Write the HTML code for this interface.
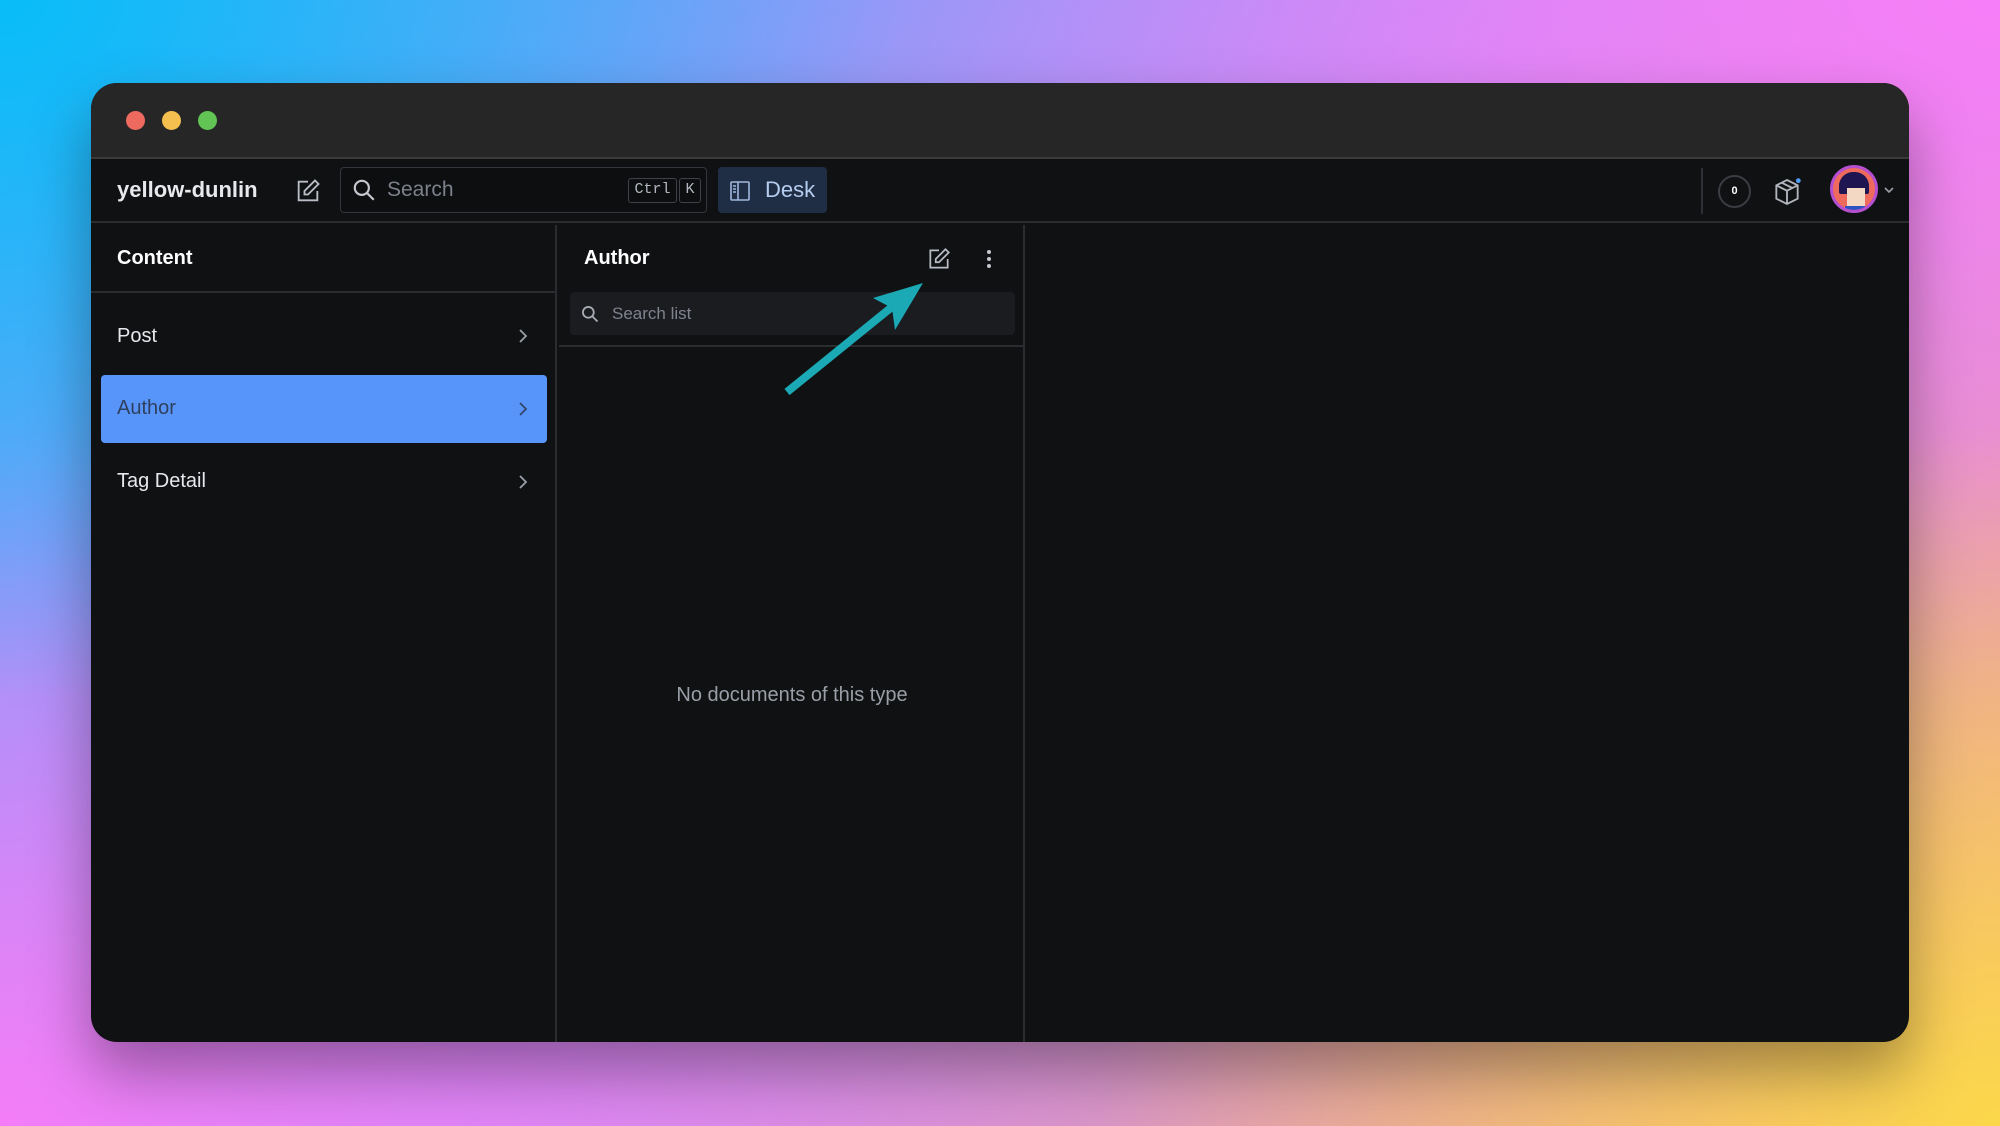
<!DOCTYPE html>
<html><head><meta charset="utf-8"><style>
*{margin:0;padding:0;box-sizing:border-box}
body{width:2000px;height:1126px;overflow:hidden;font-family:"Liberation Sans",sans-serif;position:relative;
background:
radial-gradient(ellipse 900px 700px at 0% 0%, #08bdf8 0%, rgba(8,189,248,0) 100%),
radial-gradient(ellipse 900px 700px at 100% 100%, #fbd84a 0%, rgba(251,216,74,0) 100%),
radial-gradient(ellipse 1100px 700px at 100% 0%, #f77ef9 0%, rgba(247,126,249,0) 100%),
radial-gradient(ellipse 1100px 700px at 0% 100%, #f47df7 0%, rgba(244,125,247,0) 100%),
linear-gradient(135deg,#5aa8fb,#c48cf5 50%,#f7a38a);}
.win{position:absolute;left:91px;top:83px;width:1818px;height:959px;border-radius:26px;overflow:hidden;background:#101113;box-shadow:0 30px 60px rgba(0,0,0,.35)}
.title{position:absolute;left:0;top:0;right:0;height:76px;background:#262626;border-bottom:2px solid #3a3a3a}
.dot{position:absolute;top:28px;width:19px;height:19px;border-radius:50%}
.tb{position:absolute;left:0;top:77px;right:0;height:63px;background:#101113;border-bottom:2px solid #2a2c30}
.abs{position:absolute}
</style></head><body>
<div class="win">
 <div class="title">
  <div class="dot" style="left:35px;background:#ee6a5e"></div>
  <div class="dot" style="left:71px;background:#f5bf4f"></div>
  <div class="dot" style="left:107px;background:#61c454"></div>
 </div>
 <div class="tb">
  <div class="abs" style="left:26px;top:17px;font-weight:bold;font-size:22px;color:#e6e8ec">yellow-dunlin</div>
  <svg class="abs" style="left:203px;top:17px" width="28" height="28" viewBox="0 0 24 24" fill="none" stroke="#b9bdc6" stroke-width="1.6"><path d="M12 4H4v16h16v-8"/><path d="M18 3l3 3-9 9H9v-3z"/></svg>
  <div class="abs" style="left:249px;top:7px;width:367px;height:46px;border:1.5px solid #33363c;border-radius:4px;background:#0d0e10"></div>
  <svg class="abs" style="left:260px;top:17px" width="26" height="26" viewBox="0 0 24 24" fill="none" stroke="#c4c7ce" stroke-width="2"><circle cx="10" cy="10" r="6.5"/><path d="M15 15l6 6"/></svg>
  <div class="abs" style="left:296px;top:18px;font-size:21px;color:#7b808a">Search</div>
  <div class="abs" style="left:537px;top:18px;width:49px;height:25px;border:1.5px solid #3e4148;border-radius:3px;font-family:'Liberation Mono',monospace;font-size:15px;color:#b4b8c0;text-align:center;line-height:22px">Ctrl</div>
  <div class="abs" style="left:588px;top:18px;width:22px;height:25px;border:1.5px solid #3e4148;border-radius:3px;font-family:'Liberation Mono',monospace;font-size:15px;color:#b4b8c0;text-align:center;line-height:22px">K</div>
  <div class="abs" style="left:627px;top:7px;width:109px;height:46px;background:#1f2e45;border-radius:4px"></div>
  <svg class="abs" style="left:637px;top:19px" width="24" height="24" viewBox="0 0 24 24" fill="none" stroke="#9fb8dc" stroke-width="1.6"><rect x="3" y="3" width="18" height="18" rx="1"/><path d="M10 3v18M5 7h3M5 10h3M5 13h3"/></svg>
  <div class="abs" style="left:674px;top:17px;font-size:22px;color:#b6cdef">Desk</div>
  <div class="abs" style="left:1610px;top:8px;width:2px;height:46px;background:#2e3035"></div>
  <div class="abs" style="left:1627px;top:15px;width:33px;height:33px;border:2px solid #3a3d43;border-radius:50%;color:#fff;font-size:11px;font-weight:bold;text-align:center;line-height:29px">0</div>
  <svg class="abs" style="left:1680px;top:16px" width="32" height="32" viewBox="0 0 24 24" fill="none" stroke="#b0b4bc" stroke-width="1.4"><path d="M12 3l8 4v10l-8 4-8-4V7z"/><path d="M4 7l8 4 8-4M12 11v10M8 5l8 4"/><circle cx="20.5" cy="3.5" r="1.8" fill="#4e9cf5" stroke="none"/></svg>
  <div class="abs" style="left:1739px;top:5px;width:48px;height:48px;border-radius:50%;background:#ee6a5c;border:3px solid #b44fd0;overflow:hidden">
   <div class="abs" style="left:6px;top:4px;width:30px;height:22px;background:#1f1550;border-radius:14px 14px 2px 2px"></div>
   <div class="abs" style="left:14px;top:20px;width:18px;height:18px;background:#f3d8c4"></div>
   <div class="abs" style="left:12px;top:38px;width:20px;height:6px;background:#2c53c6"></div>
  </div>
  <svg class="abs" style="left:1791px;top:23px" width="14" height="14" viewBox="0 0 14 14" fill="none" stroke="#9a9ea6" stroke-width="1.6"><path d="M3 5l4 4 4-4"/></svg>
 </div>
 <div class="abs" style="left:0;top:142px;width:466px;height:817px;border-right:2px solid #2a2c30">
  <div class="abs" style="left:26px;top:22px;font-size:20px;font-weight:bold;color:#fff">Content</div>
  <div class="abs" style="left:0;top:66px;width:466px;height:2px;background:#2a2c30"></div>
  <div class="abs" style="left:26px;top:100px;font-size:20px;color:#e6e8ec">Post</div>
  <div class="abs" style="left:10px;top:150px;width:446px;height:68px;background:#5895fb;border-radius:4px"></div>
  <div class="abs" style="left:26px;top:172px;font-size:20px;color:#2f405e">Author</div>
  <div class="abs" style="left:26px;top:245px;font-size:20px;color:#e6e8ec">Tag Detail</div>
  <svg class="abs" style="left:424px;top:102px" width="16" height="18" viewBox="0 0 16 18" fill="none" stroke="#9ba0a8" stroke-width="1.8"><path d="M5 3l6 6-6 6"/></svg>
  <svg class="abs" style="left:424px;top:175px" width="16" height="18" viewBox="0 0 16 18" fill="none" stroke="#33466a" stroke-width="1.8"><path d="M5 3l6 6-6 6"/></svg>
  <svg class="abs" style="left:424px;top:248px" width="16" height="18" viewBox="0 0 16 18" fill="none" stroke="#9ba0a8" stroke-width="1.8"><path d="M5 3l6 6-6 6"/></svg>
 </div>
 <div class="abs" style="left:468px;top:142px;width:466px;height:817px;border-right:2px solid #2a2c30">
  <div class="abs" style="left:25px;top:22px;font-size:20px;font-weight:bold;color:#fff">Author</div>
  <svg class="abs" style="left:367px;top:21px" width="26" height="26" viewBox="0 0 24 24" fill="none" stroke="#b9bdc6" stroke-width="1.6"><path d="M12 4H4v16h16v-8"/><path d="M18 3l3 3-9 9H9v-3z"/></svg>
  <div class="abs" style="left:428px;top:25px;width:4px;height:4px;border-radius:50%;background:#c4c7ce"></div>
  <div class="abs" style="left:428px;top:32px;width:4px;height:4px;border-radius:50%;background:#c4c7ce"></div>
  <div class="abs" style="left:428px;top:39px;width:4px;height:4px;border-radius:50%;background:#c4c7ce"></div>
  <div class="abs" style="left:11px;top:67px;width:445px;height:43px;background:#1b1c20;border-radius:4px"></div>
  <svg class="abs" style="left:21px;top:79px" width="20" height="20" viewBox="0 0 24 24" fill="none" stroke="#a7abb3" stroke-width="2.2"><circle cx="10" cy="10" r="6.5"/><path d="M15 15l6 6"/></svg>
  <div class="abs" style="left:53px;top:79px;font-size:17px;color:#7e838d">Search list</div>
  <div class="abs" style="left:0;top:120px;width:466px;height:2px;background:#2a2c30"></div>
  <div class="abs" style="left:0;top:459px;width:466px;text-align:center;font-size:20px;color:#9a9ea6">No documents of this type</div>
 </div>
</div>
<svg class="abs" style="left:0;top:0;position:absolute" width="2000" height="1126"><path d="M787 392L898 302" stroke="#1aa9b5" stroke-width="8" fill="none"/><path d="M923 283L873 298L892 308L895 330z" fill="#1aa9b5"/></svg>
</body></html>
